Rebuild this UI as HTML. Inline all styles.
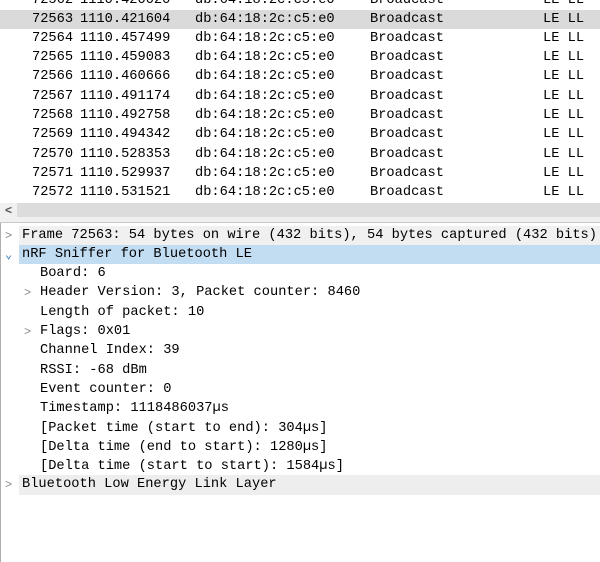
<!DOCTYPE html>
<html><head><style>
body{margin:0;width:600px;height:562px;overflow:hidden;background:#fff;font-family:"Liberation Mono",monospace;font-size:13.7px;color:#000;position:relative}
.r{position:absolute;left:0;width:600px;height:19.3px;line-height:19.3px;white-space:pre}
.r span{position:absolute}
.sel{background:#dadada}
.d{position:absolute;left:1px;width:599px;height:19.3px;line-height:20.3px;white-space:pre}
.arr{position:absolute;color:#888;font-size:12px}
</style></head><body>
<div class="r" style="top:-9px"><span style="left:32px">72562</span><span style="left:80px">1110.420020</span><span style="left:195px">db:64:18:2c:c5:e0</span><span style="left:370px">Broadcast</span><span style="left:543px">LE LL</span></div>
<div class="r sel" style="top:9.5px"><span style="left:32px">72563</span><span style="left:80px">1110.421604</span><span style="left:195px">db:64:18:2c:c5:e0</span><span style="left:370px">Broadcast</span><span style="left:543px">LE LL</span></div>
<div class="r" style="top:28.8px"><span style="left:32px">72564</span><span style="left:80px">1110.457499</span><span style="left:195px">db:64:18:2c:c5:e0</span><span style="left:370px">Broadcast</span><span style="left:543px">LE LL</span></div>
<div class="r" style="top:48.1px"><span style="left:32px">72565</span><span style="left:80px">1110.459083</span><span style="left:195px">db:64:18:2c:c5:e0</span><span style="left:370px">Broadcast</span><span style="left:543px">LE LL</span></div>
<div class="r" style="top:67.4px"><span style="left:32px">72566</span><span style="left:80px">1110.460666</span><span style="left:195px">db:64:18:2c:c5:e0</span><span style="left:370px">Broadcast</span><span style="left:543px">LE LL</span></div>
<div class="r" style="top:86.7px"><span style="left:32px">72567</span><span style="left:80px">1110.491174</span><span style="left:195px">db:64:18:2c:c5:e0</span><span style="left:370px">Broadcast</span><span style="left:543px">LE LL</span></div>
<div class="r" style="top:106px"><span style="left:32px">72568</span><span style="left:80px">1110.492758</span><span style="left:195px">db:64:18:2c:c5:e0</span><span style="left:370px">Broadcast</span><span style="left:543px">LE LL</span></div>
<div class="r" style="top:125.3px"><span style="left:32px">72569</span><span style="left:80px">1110.494342</span><span style="left:195px">db:64:18:2c:c5:e0</span><span style="left:370px">Broadcast</span><span style="left:543px">LE LL</span></div>
<div class="r" style="top:144.6px"><span style="left:32px">72570</span><span style="left:80px">1110.528353</span><span style="left:195px">db:64:18:2c:c5:e0</span><span style="left:370px">Broadcast</span><span style="left:543px">LE LL</span></div>
<div class="r" style="top:163.9px"><span style="left:32px">72571</span><span style="left:80px">1110.529937</span><span style="left:195px">db:64:18:2c:c5:e0</span><span style="left:370px">Broadcast</span><span style="left:543px">LE LL</span></div>
<div class="r" style="top:183.2px"><span style="left:32px">72572</span><span style="left:80px">1110.531521</span><span style="left:195px">db:64:18:2c:c5:e0</span><span style="left:370px">Broadcast</span><span style="left:543px">LE LL</span></div>
<div style="position:absolute;top:203px;left:0;width:600px;height:14px;background:#dcdcdc"></div>
<div style="position:absolute;top:203px;left:0;width:17px;height:14px;background:#f0f0f0;font-size:12px;line-height:14px;text-align:center;color:#555;font-family:'Liberation Sans',sans-serif;font-weight:bold">&lt;</div>
<div style="position:absolute;top:217px;left:0;width:600px;height:5px;background:#f0f0f0"></div>
<div style="position:absolute;top:222px;left:0;width:600px;height:1px;background:#c8c8c8"></div>
<div style="position:absolute;top:223px;left:0;width:1px;height:339px;background:#b0b0b0"></div>
<div class="d" style="top:225.5px;background:#f0f0f0;left:19px;width:581px"></div>
<div class="d" style="top:225.5px"><span class="arr" style="left:4px">&gt;</span><span style="position:absolute;left:21px">Frame 72563: 54 bytes on wire (432 bits), 54 bytes captured (432 bits)</span></div>
<div class="d" style="top:244.8px;background:#c2dcf2;left:19px;width:581px"></div>
<div class="d" style="top:244.8px"><span class="arr" style="left:4px;color:#2a7ac0">&#x2304;</span><span style="position:absolute;left:21px">nRF Sniffer for Bluetooth LE</span></div>
<div class="d" style="top:264.1px"><span style="position:absolute;left:39px">Board: 6</span></div>
<div class="d" style="top:283.4px"><span class="arr" style="left:23px">&gt;</span><span style="position:absolute;left:39px">Header Version: 3, Packet counter: 8460</span></div>
<div class="d" style="top:302.7px"><span style="position:absolute;left:39px">Length of packet: 10</span></div>
<div class="d" style="top:322px"><span class="arr" style="left:23px">&gt;</span><span style="position:absolute;left:39px">Flags: 0x01</span></div>
<div class="d" style="top:341.3px"><span style="position:absolute;left:39px">Channel Index: 39</span></div>
<div class="d" style="top:360.6px"><span style="position:absolute;left:39px">RSSI: -68 dBm</span></div>
<div class="d" style="top:379.9px"><span style="position:absolute;left:39px">Event counter: 0</span></div>
<div class="d" style="top:399.2px"><span style="position:absolute;left:39px">Timestamp: 1118486037µs</span></div>
<div class="d" style="top:418.5px"><span style="position:absolute;left:39px">[Packet time (start to end): 304µs]</span></div>
<div class="d" style="top:437.8px"><span style="position:absolute;left:39px">[Delta time (end to start): 1280µs]</span></div>
<div class="d" style="top:457.1px"><span style="position:absolute;left:39px">[Delta time (start to start): 1584µs]</span></div>
<div class="d" style="top:475.4px;background:#eeeeee;left:19px;width:581px"></div>
<div class="d" style="top:475.4px"><span class="arr" style="left:4px">&gt;</span><span style="position:absolute;left:21px">Bluetooth Low Energy Link Layer</span></div>
</body></html>
